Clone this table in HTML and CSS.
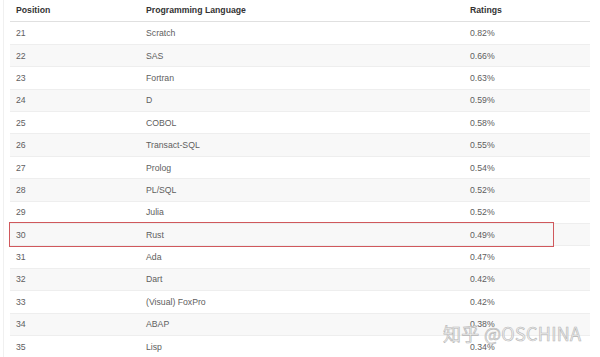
FILE: index.html
```html
<!DOCTYPE html>
<html>
<head>
<meta charset="utf-8">
<link rel="stylesheet" href="styles.css">
</head>
<body>
<div class="page">
  <div class="table">
    <div class="row head"><div>Position</div><div>Programming Language</div><div>Ratings</div></div>
    <div class="row"><div>21</div><div>Scratch</div><div>0.82%</div></div>
    <div class="row"><div>22</div><div>SAS</div><div>0.66%</div></div>
    <div class="row"><div>23</div><div>Fortran</div><div>0.63%</div></div>
    <div class="row"><div>24</div><div>D</div><div>0.59%</div></div>
    <div class="row"><div>25</div><div>COBOL</div><div>0.58%</div></div>
    <div class="row"><div>26</div><div>Transact-SQL</div><div>0.55%</div></div>
    <div class="row"><div>27</div><div>Prolog</div><div>0.54%</div></div>
    <div class="row"><div>28</div><div>PL/SQL</div><div>0.52%</div></div>
    <div class="row"><div>29</div><div>Julia</div><div>0.52%</div></div>
    <div class="row"><div>30</div><div>Rust</div><div>0.49%</div></div>
    <div class="row"><div>31</div><div>Ada</div><div>0.47%</div></div>
    <div class="row"><div>32</div><div>Dart</div><div>0.42%</div></div>
    <div class="row"><div>33</div><div>(Visual) FoxPro</div><div>0.42%</div></div>
    <div class="row"><div>34</div><div>ABAP</div><div>0.38%</div></div>
    <div class="row"><div>35</div><div>Lisp</div><div>0.34%</div></div>
  </div>
  <div class="highlight"></div>
  <div class="watermark">知乎 @OSCHINA</div>
</div>
</body>
</html>
```

FILE: styles.css
```css
html, body {
  margin: 0;
  padding: 0;
  background: #fff;
}
body {
  width: 600px;
  height: 357px;
  overflow: hidden;
  font-family: "Liberation Sans", Arial, sans-serif;
}
.page {
  position: relative;
  width: 597px;
  height: 357px;
  margin-left: 3px;
  padding-left: 6px;
  box-sizing: border-box;
  border-left: 1px solid #f0f0f0;
}
.table {
  width: 580px;
}
.row {
  display: grid;
  grid-template-columns: 130px 324px 126px;
  height: 22.4px;
  align-items: center;
  font-size: 8.7px;
  color: #5e5e5e;
  border-top: 1px solid #eeeeee;
  box-sizing: border-box;
}
.row > div {
  padding-left: 6px;
}
.row:nth-child(odd):not(.head) {
  background: #f8f8f8;
}
.row.head {
  height: 21.5px;
  font-weight: bold;
  color: #333;
  border-top: none;
  border-bottom: 1.5px solid #e0e0e0;
}
.row.head + .row {
  border-top: none;
}
.highlight {
  position: absolute;
  left: 5px;
  top: 222px;
  width: 545px;
  height: 25px;
  border: 1.5px solid #d0585c;
  box-sizing: border-box;
}
.watermark {
  position: absolute;
  left: 439px;
  top: 320px;
  font-family: "Noto Sans CJK SC", "Liberation Sans", sans-serif;
  font-size: 18px;
  color: rgba(235,235,235,0.7);
  -webkit-text-stroke: 0.6px #b5b5b5;
  letter-spacing: 0.3px;
  white-space: nowrap;
}
```
